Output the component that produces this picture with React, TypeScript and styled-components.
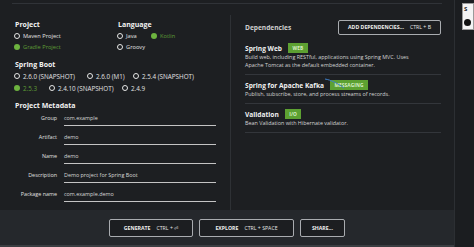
import React from "react";
import styled, { createGlobalStyle } from "styled-components";

const Global = createGlobalStyle`
  html, body { margin: 0; padding: 0; background: #1d1f22; }
  body { font-family: "Open Sans", "Liberation Sans", sans-serif; -webkit-font-smoothing: antialiased; }
  * { box-sizing: border-box; }
`;

const Page = styled.div`
  display: flex;
  width: 474px;
  height: 247px;
  overflow: hidden;
  background: #1d1f22;
`;

const Main = styled.div`
  width: 459px;
  display: flex;
  flex-direction: column;
  border-right: 1px solid #2c2f33;
`;

const TopRule = styled.div`
  height: 15px;
  padding: 3px 12px 0;
  & > div { height: 1px; background: #303338; }
`;

const Content = styled.div`
  flex: 1;
  display: flex;
  min-height: 0;
`;

const LeftCol = styled.div`
  width: 231px;
  border-right: 1px solid #2e3135;
  padding: 5px 0 0 15px;
`;

const RightCol = styled.div`
  flex: 1;
  padding: 3px 13px 0 14px;
`;

const SectionTitle = styled.div<{ $top?: number }>`
  font-size: 7px;
  font-weight: 700;
  line-height: 10px;
  height: 10px;
  color: #f2f2f2;
  margin-top: ${(p) => p.$top ?? 0}px;
`;

const TwoCols = styled.div`
  display: flex;
`;

const Group = styled.div<{ $w?: number }>`
  width: ${(p) => (p.$w ? `${p.$w}px` : "auto")};
  display: flex;
  flex-direction: column;
`;

const RadioRow = styled.div<{ $h?: number }>`
  display: flex;
  align-items: center;
  height: ${(p) => p.$h ?? 11}px;
`;

const RadioItem = styled.div<{ $on?: boolean; $size?: number; $w?: number }>`
  display: flex;
  align-items: center;
  gap: 3px;
  width: ${(p) => (p.$w ? `${p.$w}px` : "auto")};
  font-size: ${(p) => p.$size ?? 5.7}px;
  color: ${(p) => (p.$on ? "#5e9e36" : "#e2e2e2")};
  white-space: nowrap;
`;

const Dot = styled.span<{ $on?: boolean }>`
  width: 6px;
  height: 6px;
  flex: none;
  border-radius: 50%;
  margin-left: -1px;
  border: ${(p) => (p.$on ? "none" : "1.2px solid #e6e6e6")};
  background: ${(p) => (p.$on ? "#6db33f" : "transparent")};
`;

const Radio = ({
  label,
  on,
  size,
  w,
}: {
  label: string;
  on?: boolean;
  size?: number;
  w?: number;
}) => (
  <RadioItem $on={on} $size={size} $w={w}>
    <Dot $on={on} />
    {label}
  </RadioItem>
);

const Fields = styled.div`
  display: flex;
  flex-direction: column;
  gap: 7px;
  margin-top: 2px;
`;

const FieldRow = styled.div`
  display: flex;
  gap: 7px;
  height: 12px;
`;

const FieldLabel = styled.div`
  width: 42px;
  text-align: right;
  font-size: 5.4px;
  line-height: 10px;
  color: #e0e0e0;
  white-space: nowrap;
`;

const FieldInput = styled.div`
  width: 152px;
  height: 13px;
  font-size: 5.4px;
  line-height: 10px;
  color: #d8d8d8;
  border-bottom: 1.5px solid #c4c4c4;
`;

const DepHeader = styled.div`
  display: flex;
  justify-content: space-between;
  align-items: center;
  height: 18px;
`;

const DepTitle = styled.div`
  font-size: 6.6px;
  font-weight: 700;
  color: #cfcfcf;
`;

const OutlineButton = styled.div<{ $w: number; $h?: number }>`
  width: ${(p) => p.$w}px;
  height: ${(p) => p.$h ?? 15}px;
  border: 1.5px solid #a9acb0;
  border-radius: 2px;
  background: #1c1e21;
  display: flex;
  align-items: center;
  justify-content: center;
  gap: 6px;
  color: #f0f0f0;
  font-size: 5.2px;
  font-weight: 700;
  white-space: nowrap;
`;

const Light = styled.span`
  font-weight: 400;
  color: #e6e6e6;
`;

const DepList = styled.div`
  margin-top: 2px;
`;

const DepItem = styled.div`
  padding: 5px 0 5px;
  border-bottom: 1px solid #33363b;
`;

const DepName = styled.div`
  display: flex;
  align-items: center;
  gap: 6px;
  height: 10px;
  font-size: 6.6px;
  font-weight: 700;
  color: #f0f0f0;
  position: relative;
`;

const Badge = styled.span`
  background: #5da132;
  color: #d9efc8;
  font-size: 4.8px;
  font-weight: 700;
  height: 10px;
  line-height: 10px;
  padding: 0 4.5px;
  letter-spacing: 0.1px;
`;

const DepDesc = styled.div`
  font-size: 5.4px;
  line-height: 8px;
  color: #d4d4d4;
`;

const Scribble = styled.svg`
  position: absolute;
  left: 78px;
  top: -3px;
  pointer-events: none;
`;

const Footer = styled.div`
  height: 35px;
  background: #25282c;
  display: flex;
  justify-content: center;
  gap: 6px;
  padding-top: 9px;
`;

const BottomBar = styled.div`
  height: 2px;
  background: #3b3e42;
`;

const Side = styled.div`
  flex: 1;
  background: #1b1d20;
  padding: 3px 0 0 7px;
`;

const Card = styled.div`
  width: 12px;
  height: 27px;
  background: #f4f4f4;
  border: 1px solid #9a9a9a;
  padding: 2px 0 0 1px;
  font-size: 6px;
  font-weight: 700;
  color: #222;
  line-height: 7px;
  overflow: hidden;
  display: flex;
  flex-direction: column;
  gap: 6px;
`;

const CardDot = styled.span`
  width: 7px;
  height: 7px;
  border-radius: 50%;
  background: #111;
`;

const deps = [
  {
    name: "Spring Web",
    badge: "WEB",
    desc: [
      "Build web, including RESTful, applications using Spring MVC. Uses",
      "Apache Tomcat as the default embedded container.",
    ],
  },
  {
    name: "Spring for Apache Kafka",
    badge: "MESSAGING",
    desc: ["Publish, subscribe, store, and process streams of records."],
    scribble: true,
  },
  {
    name: "Validation",
    badge: "I/O",
    desc: ["Bean Validation with Hibernate validator."],
  },
];

const fields = [
  ["Group", "com.example"],
  ["Artifact", "demo"],
  ["Name", "demo"],
  ["Description", "Demo project for Spring Boot"],
  ["Package name", "com.example.demo"],
];

const bootRows: { label: string; on?: boolean; w?: number }[][] = [
  [
    { label: "2.6.0 (SNAPSHOT)", w: 73 },
    { label: "2.6.0 (M1)", w: 46 },
    { label: "2.5.4 (SNAPSHOT)" },
  ],
  [
    { label: "2.5.3", on: true, w: 35 },
    { label: "2.4.10 (SNAPSHOT)", w: 73 },
    { label: "2.4.9" },
  ],
];

const VS = 6.3;

export default function App() {
  return (
    <>
      <Global />
      <Page>
        <Main>
          <TopRule>
            <div />
          </TopRule>
          <Content>
            <LeftCol>
              <TwoCols>
                <Group $w={103}>
                  <SectionTitle>Project</SectionTitle>
                  <RadioRow>
                    <Radio label="Maven Project" />
                  </RadioRow>
                  <RadioRow>
                    <Radio label="Gradle Project" on />
                  </RadioRow>
                </Group>
                <Group>
                  <SectionTitle>Language</SectionTitle>
                  <RadioRow>
                    <Radio label="Java" w={34} />
                    <Radio label="Kotlin" on />
                  </RadioRow>
                  <RadioRow>
                    <Radio label="Groovy" />
                  </RadioRow>
                </Group>
              </TwoCols>
              <SectionTitle $top={8}>Spring Boot</SectionTitle>
              {bootRows.map((row, i) => (
                <RadioRow $h={12} key={i}>
                  {row.map((r) => (
                    <Radio key={r.label} label={r.label} on={r.on} w={r.w} size={VS} />
                  ))}
                </RadioRow>
              ))}
              <SectionTitle $top={7}>Project Metadata</SectionTitle>
              <Fields>
                {fields.map(([l, v]) => (
                  <FieldRow key={l}>
                    <FieldLabel>{l}</FieldLabel>
                    <FieldInput>{v}</FieldInput>
                  </FieldRow>
                ))}
              </Fields>
            </LeftCol>
            <RightCol>
              <DepHeader>
                <DepTitle>Dependencies</DepTitle>
                <OutlineButton $w={103}>
                  <span>ADD DEPENDENCIES...</span>
                  <Light>CTRL + B</Light>
                </OutlineButton>
              </DepHeader>
              <DepList>
                {deps.map((d) => (
                  <DepItem key={d.name}>
                    <DepName>
                      {d.name}
                      <Badge>{d.badge}</Badge>
                      {d.scribble && (
                        <Scribble width="24" height="14" viewBox="0 0 24 14">
                          <path
                            d="M2 2 C 8 3, 14 6, 21 11"
                            stroke="#3f7fc8"
                            strokeWidth="1"
                            fill="none"
                          />
                        </Scribble>
                      )}
                    </DepName>
                    {d.desc.map((t) => (
                      <DepDesc key={t}>{t}</DepDesc>
                    ))}
                  </DepItem>
                ))}
              </DepList>
            </RightCol>
          </Content>
          <Footer>
            <OutlineButton $w={84} $h={18}>
              <span>GENERATE</span>
              <Light>CTRL + ⏎</Light>
            </OutlineButton>
            <OutlineButton $w={95} $h={18}>
              <span>EXPLORE</span>
              <Light>CTRL + SPACE</Light>
            </OutlineButton>
            <OutlineButton $w={45} $h={18}>
              <span>SHARE...</span>
            </OutlineButton>
          </Footer>
          <BottomBar />
        </Main>
        <Side>
          <Card>
            <span>S</span>
            <CardDot />
          </Card>
        </Side>
      </Page>
    </>
  );
}
